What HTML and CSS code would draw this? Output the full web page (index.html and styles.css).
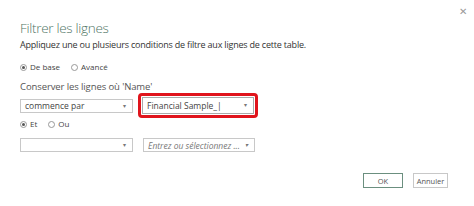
FILE: index.html
```html
<!DOCTYPE html>
<html lang="fr">
<head>
  <meta charset="UTF-8" />
  <title>Filtrer les lignes</title>
  <link rel="stylesheet" href="styles.css">
</head>
<body>
  <div class="dialog">
    <span class="close">&#x2715;</span>
    <h1>Filtrer les lignes</h1>
    <p class="desc">Appliquez une ou plusieurs conditions de filtre aux lignes de cette table.</p>

    <div class="radios mode">
      <label><span class="radio on"></span>De base</label>
      <label><span class="radio"></span>Avancé</label>
    </div>

    <div class="keep">Conserver les lignes où 'Name'</div>

    <div class="row first">
      <div class="select op">commence par<span class="caret">&#9662;</span></div>
      <div class="highlight">
        <div class="select value">Financial Sample<span class="cursor">_|</span><span class="caret">&#9662;</span></div>
      </div>
    </div>

    <div class="radios andor">
      <label><span class="radio on"></span>Et</label>
      <label><span class="radio"></span>Ou</label>
    </div>

    <div class="row second">
      <div class="select op"><span class="caret">&#9662;</span></div>
      <div class="select value placeholder">Entrez ou sélectionnez ...<span class="caret">&#9662;</span></div>
    </div>

    <div class="buttons">
      <button class="btn ok">OK</button>
      <button class="btn cancel">Annuler</button>
    </div>
  </div>
</body>
</html>
```

FILE: styles.css
```css
html, body {
  margin: 0;
  padding: 0;
  background: #fff;
  font-family: 'Open Sans', 'Noto Sans', sans-serif;
  color: #444;
}

.dialog {
  position: relative;
  width: 474px;
  height: 206px;
  box-sizing: border-box;
  padding: 18px 20px 0 20px;
  overflow: hidden;
}

.close {
  position: absolute;
  top: 4px;
  right: 7px;
  font-size: 10px;
  color: #999;
}

h1 {
  margin: 0;
  font-size: 13.5px;
  font-weight: 300;
  letter-spacing: -0.3px;
  line-height: 20px;
  color: #4f7565;
}

.desc {
  margin: 0;
  font-size: 9px;
  letter-spacing: -0.2px;
  line-height: 14px;
  color: #333;
}

.radios {
  display: flex;
  gap: 11px;
  font-size: 8px;
  line-height: 12px;
  color: #444;
}

.radios label {
  display: flex;
  align-items: center;
  gap: 3px;
}

.radio {
  width: 5px;
  height: 5px;
  border: 1px solid #999;
  border-radius: 50%;
  position: relative;
}

.radio.on::after {
  content: "";
  position: absolute;
  left: 1px;
  top: 1px;
  width: 3px;
  height: 3px;
  border-radius: 50%;
  background: #555;
}

.mode {
  margin-top: 9px;
}

.keep {
  margin-top: 8px;
  font-size: 9.5px;
  letter-spacing: -0.1px;
  line-height: 12px;
  color: #555;
}

.row {
  display: flex;
  align-items: center;
  gap: 10px;
}

.select {
  display: flex;
  align-items: center;
  height: 12px;
  border: 1px solid #c8c8c8;
  padding: 0 4px;
  font-size: 8.5px;
  color: #444;
  position: relative;
  box-sizing: content-box;
}

.select.op {
  width: 103px;
}

.select.value {
  width: 102px;
}

.caret {
  position: absolute;
  right: 6px;
  top: 0;
  font-size: 6px;
  line-height: 12px;
  color: #777;
}

.highlight {
  border: 3px solid #e0141c;
  border-radius: 4px;
  padding: 1px;
  margin-left: -5px;
}

.highlight .select {
  height: 15px;
  border-color: #aaa;
}

.highlight .caret {
  line-height: 15px;
}

.placeholder {
  font-style: italic;
  color: #777;
}

.andor {
  margin-top: 0;
}

.row.second {
  margin-top: 8px;
}

.buttons {
  display: flex;
  justify-content: flex-end;
  gap: 10px;
  margin-top: 21px;
  margin-right: 6px;
}

.btn {
  font-family: inherit;
  font-size: 7.5px;
  color: #555;
  background: #fff;
  border: 1px solid #c8c8c8;
  height: 15px;
  padding: 0;
}

.btn.ok {
  width: 40px;
  border-color: #6b8f7f;
}

.btn.cancel {
  width: 35px;
}
```
